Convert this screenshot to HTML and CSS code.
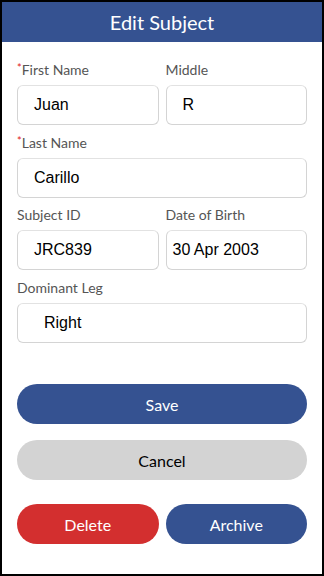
FILE: index.html
```html
<!DOCTYPE html>
<html lang="en">
<head>
    <meta charset="UTF-8">
    <meta name="viewport" content="width=device-width, initial-scale=1.0">
    <title>Edit Subject</title>
    <link rel="stylesheet" href="styles.css">
</head>
<body>
    <div class="screen">
        <div class="header">Edit Subject</div>

        <div class="form">
            <div class="row">
                <div class="field">
                    <div class="label"><span class="req">*</span>First Name</div>
                    <div class="input">Juan</div>
                </div>
                <div class="field">
                    <div class="label">Middle</div>
                    <div class="input">R</div>
                </div>
            </div>

            <div class="field">
                <div class="label"><span class="req">*</span>Last Name</div>
                <div class="input">Carillo</div>
            </div>

            <div class="row">
                <div class="field">
                    <div class="label">Subject ID</div>
                    <div class="input">JRC839</div>
                </div>
                <div class="field">
                    <div class="label">Date of Birth</div>
                    <div class="input date">30 Apr 2003</div>
                </div>
            </div>

            <div class="field">
                <div class="label">Dominant Leg</div>
                <div class="input picker">Right</div>
            </div>

            <div class="actions">
                <button class="btn save">Save</button>
                <button class="btn cancel">Cancel</button>
                <div class="row btn-row">
                    <button class="btn delete">Delete</button>
                    <button class="btn archive">Archive</button>
                </div>
            </div>
        </div>
    </div>
</body>
</html>
```

FILE: styles.css
```css
body {
    margin: 0;
    padding: 2px;
    background-color: #000000;
    font-family: Lato, "Noto Sans", sans-serif;
}

.screen {
    background-color: #ffffff;
    height: 572px;
    display: flex;
    flex-direction: column;
}

.header {
    height: 40px;
    line-height: 40px;
    background-color: #355291;
    color: #ffffff;
    text-align: center;
    font-size: 20px;
}

.form {
    padding: 18px 15px 0 15px;
}

.row {
    display: flex;
    gap: 7px;
}

.row .field {
    flex: 1;
}

.field {
    margin-bottom: 7.5px;
}

.label {
    height: 20px;
    line-height: 20px;
    font-size: 14px;
    color: #555555;
    margin-bottom: 5px;
}

.req {
    position: relative;
    top: -3px;
    color: #e02020;
    font-size: 11px;
}

.input {
    box-sizing: border-box;
    height: 40px;
    line-height: 38px;
    border: 1px solid #d4d4d4;
    border-top-color: #e2e2e2;
    border-radius: 6px;
    padding-left: 16px;
    font-family: "Liberation Sans", Arial, sans-serif;
    font-size: 16px;
    color: #000000;
}

.input.date {
    padding-left: 6px;
}

.input.picker {
    padding-left: 26px;
}

.actions {
    padding-top: 34px;
}

.btn {
    display: block;
    width: 100%;
    height: 40px;
    border: none;
    border-radius: 20px;
    font-family: Lato, "Noto Sans", sans-serif;
    font-size: 16px;
    color: #ffffff;
    padding: 0;
}

.save {
    background-color: #355291;
    margin-bottom: 16px;
}

.cancel {
    background-color: #d3d3d3;
    color: #000000;
    margin-bottom: 24px;
}

.btn-row .btn {
    flex: 1;
}

.delete {
    background-color: #d32f2f;
}

.archive {
    background-color: #355291;
}
```
